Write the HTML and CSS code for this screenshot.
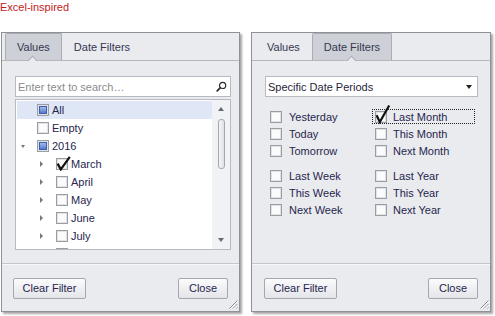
FILE: index.html
```html
<!DOCTYPE html>
<html>
<head>
<meta charset="utf-8">
<link rel="stylesheet" href="styles.css">
</head>
<body>
<div class="title">Excel-inspired</div>
<div class="panels">
  <div class="panel panel-left">
    <div class="tabs">
      <div class="tab active">Values</div>
      <div class="tab">Date Filters</div>
    </div>
    <div class="content content-left">
      <div class="search">
        <span class="placeholder">Enter text to search…</span>
        <svg class="mag" width="11" height="11" viewBox="0 0 11 11"><circle cx="6.6" cy="4.4" r="3.1" fill="none" stroke="#2b2b2b" stroke-width="1.2"/><path d="M4.4 6.6 L1.2 9.8" stroke="#2b2b2b" stroke-width="1.7" stroke-linecap="round"/></svg>
      </div>
      <div class="list">
        <div class="tree">
          <div class="row sel"><span class="exp"></span><span class="cb ind"></span><span class="lbl">All</span></div>
          <div class="row"><span class="exp"></span><span class="cb"></span><span class="lbl">Empty</span></div>
          <div class="row"><span class="exp"><span class="arr-down"></span></span><span class="cb ind"></span><span class="lbl">2016</span></div>
          <div class="row lvl1"><span class="exp"><span class="arr-right"></span></span><span class="cb"><svg class="check" width="16" height="21" viewBox="0 0 16 21"><path d="M1.6 13.6 L4.8 19.4 L13.8 6.8" fill="none" stroke="#111" stroke-width="2.2"/></svg></span><span class="lbl">March</span></div>
          <div class="row lvl1"><span class="exp"><span class="arr-right"></span></span><span class="cb"></span><span class="lbl">April</span></div>
          <div class="row lvl1"><span class="exp"><span class="arr-right"></span></span><span class="cb"></span><span class="lbl">May</span></div>
          <div class="row lvl1"><span class="exp"><span class="arr-right"></span></span><span class="cb"></span><span class="lbl">June</span></div>
          <div class="row lvl1"><span class="exp"><span class="arr-right"></span></span><span class="cb"></span><span class="lbl">July</span></div>
          <div class="row lvl1"><span class="exp"><span class="arr-right"></span></span><span class="cb"></span></div>
        </div>
        <div class="scroll">
          <span class="sbtn"><span class="arr-up"></span></span>
          <span class="thumb"></span>
          <span class="sfill"></span>
          <span class="sbtn"><span class="arr-dn"></span></span>
        </div>
      </div>
    </div>
    <div class="footer">
      <button class="btn btn-clear">Clear Filter</button>
      <button class="btn btn-close">Close</button>
    </div>
    <svg class="grip" width="10" height="10" viewBox="0 0 10 10"><path d="M9.5 1.5 L1.5 9.5 M9.5 5 L5 9.5 M9.5 8.5 L8.5 9.5" stroke="#87898e" stroke-width="1"/><path d="M10 2 L2 10 M10 5.5 L5.5 10" stroke="#ffffff" stroke-width="0.8"/></svg>
  </div>

  <div class="panel panel-right">
    <div class="tabs">
      <div class="tab">Values</div>
      <div class="tab active">Date Filters</div>
    </div>
    <div class="content content-right">
      <div class="combo">
        <span class="combo-text">Specific Date Periods</span>
        <span class="combo-arrow"></span>
      </div>
      <div class="periods">
        <div class="group">
          <div class="item"><span class="cb"></span><span class="ilbl">Yesterday</span></div>
          <div class="item"><span class="cb"></span><span class="ilbl">Today</span></div>
          <div class="item"><span class="cb"></span><span class="ilbl">Tomorrow</span></div>
          <div class="item focused"><span class="cb"><svg class="check" width="16" height="21" viewBox="0 0 16 21"><path d="M1.6 12.2 L4.8 19 L14.2 2.5" fill="none" stroke="#111" stroke-width="2.2"/></svg></span><span class="ilbl">Last Month</span></div>
          <div class="item"><span class="cb"></span><span class="ilbl">This Month</span></div>
          <div class="item"><span class="cb"></span><span class="ilbl">Next Month</span></div>
        </div>
        <div class="group">
          <div class="item"><span class="cb"></span><span class="ilbl">Last Week</span></div>
          <div class="item"><span class="cb"></span><span class="ilbl">This Week</span></div>
          <div class="item"><span class="cb"></span><span class="ilbl">Next Week</span></div>
          <div class="item"><span class="cb"></span><span class="ilbl">Last Year</span></div>
          <div class="item"><span class="cb"></span><span class="ilbl">This Year</span></div>
          <div class="item"><span class="cb"></span><span class="ilbl">Next Year</span></div>
        </div>
      </div>
    </div>
    <div class="footer">
      <button class="btn btn-clear">Clear Filter</button>
      <button class="btn btn-close">Close</button>
    </div>
    <svg class="grip" width="10" height="10" viewBox="0 0 10 10"><path d="M9.5 1.5 L1.5 9.5 M9.5 5 L5 9.5 M9.5 8.5 L8.5 9.5" stroke="#87898e" stroke-width="1"/><path d="M10 2 L2 10 M10 5.5 L5.5 10" stroke="#ffffff" stroke-width="0.8"/></svg>
  </div>
</div>
</body>
</html>
```

FILE: styles.css
```css
html, body {
  margin: 0;
  padding: 0;
  background: #ffffff;
}
body {
  width: 495px;
  height: 316px;
  overflow: hidden;
  font-family: "Liberation Sans", Arial, sans-serif;
  font-size: 11px;
  color: #26264e;
}
.title {
  height: 14px;
  line-height: 14px;
  color: #c21b1b;
  padding-left: 0;
}
.panels {
  display: flex;
  margin-top: 18px;
  margin-left: 1px;
  gap: 11px;
}
.panel {
  position: relative;
  box-sizing: border-box;
  height: 280px;
  border: 1px solid #8f9196;
  background: #eaebef;
  box-shadow: 2px 2px 2px rgba(0, 0, 0, 0.35);
  display: flex;
  flex-direction: column;
}
.panel-left { width: 239px; }
.panel-right { width: 240px; }

.tabs {
  display: flex;
  height: 27px;
  padding-left: 3px;
  border-bottom: 1px solid #b6b8be;
  flex: none;
}
.tab {
  position: relative;
  box-sizing: border-box;
  height: 27px;
  line-height: 26px;
  padding: 0 11px;
  border: 1px solid transparent;
  border-bottom: none;
  color: #34374f;
}
.tab.active {
  background: #cdd0d7;
  border-color: #a9acb2;
  border-radius: 2px 2px 0 0;
}
.tab.active::after {
  content: "";
  position: absolute;
  left: 50%;
  bottom: -4px;
  width: 7px;
  height: 7px;
  margin-left: -4px;
  box-sizing: border-box;
  background: #eaebef;
  border-top: 1px solid #a9acb2;
  border-left: 1px solid #a9acb2;
  transform: rotate(45deg);
}

.content {
  box-sizing: border-box;
  height: 202px;
  flex: none;
  display: flex;
  flex-direction: column;
}
.content-left { padding: 15px 8px 0 13px; }
.content-right { padding: 15px 12px 0 13px; }

.search, .combo {
  box-sizing: border-box;
  height: 21px;
  border: 1px solid #b7bac2;
  background: #ffffff;
  display: flex;
  align-items: center;
  justify-content: space-between;
  flex: none;
}
.placeholder {
  color: #8c8c8c;
  padding-left: 2px;
}
.mag {
  margin-right: 3px;
}
.combo-text {
  padding-left: 2px;
  color: #1f1f3a;
}
.combo-arrow {
  width: 0;
  height: 0;
  border-top: 4px solid #222;
  border-left: 3.5px solid transparent;
  border-right: 3.5px solid transparent;
  margin-right: 5px;
}

.list {
  box-sizing: border-box;
  margin-top: 2px;
  height: 151px;
  border: 1px solid #b7bac2;
  background: #ffffff;
  display: flex;
  flex: none;
}
.tree {
  flex: 1;
  padding: 1px 0 0 1px;
  overflow: hidden;
}
.row {
  height: 18px;
  display: flex;
  align-items: center;
}
.row.sel { background: #dfe7f7; }
.row.lvl1 { padding-left: 19px; }
.exp {
  width: 20px;
  height: 18px;
  flex: none;
  display: flex;
  align-items: center;
}
.arr-down {
  margin-left: 4px;
  margin-top: 1px;
  width: 0;
  height: 0;
  border-top: 3px solid #75777d;
  border-left: 2.5px solid transparent;
  border-right: 2.5px solid transparent;
}
.arr-right {
  margin-left: 4px;
  width: 0;
  height: 0;
  border-left: 3.5px solid #75777d;
  border-top: 3.5px solid transparent;
  border-bottom: 3.5px solid transparent;
}
.lbl { margin-left: 3px; }

.cb {
  position: relative;
  box-sizing: border-box;
  width: 12px;
  height: 12px;
  flex: none;
  border: 1px solid #9a9da3;
  background: #fbfbfb;
  box-shadow: inset 0 0 0 1px #e1e2e5;
}
.cb.ind::after {
  content: "";
  position: absolute;
  left: 1px;
  top: 1px;
  width: 8px;
  height: 8px;
  box-sizing: border-box;
  border: 1px solid #3d5fae;
  background: linear-gradient(#a5baeb, #5379cf);
}
.check {
  position: absolute;
  left: -1px;
  top: -9px;
}

.scroll {
  width: 18px;
  flex: none;
  background: #f1f2f5;
  display: flex;
  flex-direction: column;
  align-items: center;
}
.sbtn {
  height: 18px;
  flex: none;
  display: flex;
  align-items: center;
  justify-content: center;
}
.arr-up {
  width: 0;
  height: 0;
  border-bottom: 4px solid #676971;
  border-left: 3.5px solid transparent;
  border-right: 3.5px solid transparent;
}
.arr-dn {
  width: 0;
  height: 0;
  border-top: 4px solid #676971;
  border-left: 3.5px solid transparent;
  border-right: 3.5px solid transparent;
}
.thumb {
  box-sizing: border-box;
  width: 7px;
  height: 50px;
  margin-top: 1px;
  border: 1px solid #a4a7ae;
  border-radius: 3px;
  background: linear-gradient(to right, #f6f6f8, #dfe0e4);
  flex: none;
}
.sfill { flex: 1; }

.periods {
  margin-top: 11px;
  margin-left: 2px;
  display: flex;
  flex-direction: column;
  gap: 8px;
}
.group {
  display: grid;
  grid-template-columns: 105px 103px;
  grid-template-rows: repeat(3, 17px);
  grid-auto-flow: column;
}
.item {
  box-sizing: border-box;
  display: flex;
  align-items: center;
  padding-left: 3px;
  height: 17px;
}
.item .ilbl { margin-left: 7px; }
.group .item:nth-child(n+4) .ilbl { margin-left: 6px; }
.item.focused {
  height: 15px;
  margin-top: 1px;
  outline: 1px dotted #222;
  outline-offset: -1px;
}

.footer {
  flex: 1;
  border-top: 1px solid #c4c6cc;
  box-shadow: inset 0 1px 0 #f8f8fa;
  display: flex;
  align-items: center;
  justify-content: space-between;
  padding: 1px 11px 0 11px;
}
.panel-right .footer { padding: 1px 12px 0 12px; }
.btn {
  box-sizing: border-box;
  height: 21px;
  border: 1px solid #a5a8ae;
  border-radius: 2px;
  background: linear-gradient(#fbfbfc, #e4e5e9);
  font-family: "Liberation Sans", Arial, sans-serif;
  font-size: 11px;
  color: #26264e;
  padding: 0;
  margin: 0;
}
.btn-clear { width: 73px; }
.btn-close { width: 50px; }

.grip {
  position: absolute;
  right: 1px;
  bottom: 2px;
}
```
